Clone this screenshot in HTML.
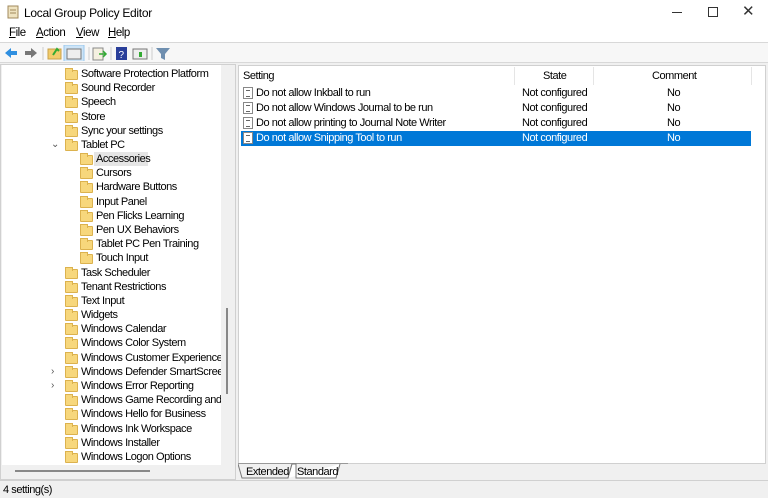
<!DOCTYPE html>
<html><head><meta charset="utf-8"><style>
*{margin:0;padding:0;box-sizing:border-box}
body{width:768px;height:498px;overflow:hidden;background:#f0f0f0;font-family:"Liberation Sans",sans-serif;font-size:11px;letter-spacing:-0.45px;color:#000;position:relative}
.a{position:absolute;white-space:nowrap}
.titlebar{left:0;top:0;width:768px;height:24px;background:#fff}
.menu{left:0;top:24px;width:768px;height:18px;background:#fff}
.tb{left:0;top:42px;width:768px;height:21px;background:#f7f7f7;border-top:1px solid #d8d8d8;border-bottom:1px solid #d8d8d8}
.fold{position:absolute;width:13px;height:10px;background:#f7d77c;border:1px solid #dcb24e;border-radius:1px}
.fold:before{content:"";position:absolute;left:-1px;top:-3px;width:6px;height:3px;background:#f7d77c;border:1px solid #dcb24e;border-bottom:none}
.row{position:absolute;height:14px;line-height:14px;white-space:nowrap}
.pi{position:absolute;width:10px;height:12px;border:1px solid #888;background:#fff}
.pi:before{content:"";position:absolute;left:2px;top:2px;width:4px;height:5px;border-top:1px solid #666;border-bottom:1px solid #666}
</style></head><body>
<div class="a titlebar"></div>
<svg class="a" style="left:6px;top:5px" width="14" height="14"><rect x="2" y="1" width="10" height="12" fill="#efe3c0" stroke="#a08a5c"/><line x1="4" y1="5" x2="10" y2="5" stroke="#a08a5c"/><line x1="4" y1="8" x2="10" y2="8" stroke="#a08a5c"/></svg>
<div class="a" style="left:24px;top:6px;font-size:12px;letter-spacing:-0.3px">Local Group Policy Editor</div>
<div class="a" style="left:672px;top:12px;width:10px;height:1px;background:#333"></div>
<div class="a" style="left:708px;top:7px;width:10px;height:10px;border:1px solid #333"></div>
<div class="a" style="left:742px;top:2px;font-size:15px;color:#333">✕</div>
<div class="a menu"></div>
<div class="a" style="left:9px;top:27px;font-size:11.5px"><u>F</u>ile</div>
<div class="a" style="left:36px;top:27px;font-size:11.5px"><u>A</u>ction</div>
<div class="a" style="left:76px;top:27px;font-size:11.5px"><u>V</u>iew</div>
<div class="a" style="left:108px;top:27px;font-size:11.5px"><u>H</u>elp</div>
<div class="a tb"></div>
<svg class="a" style="left:3px;top:45px" width="180" height="16">
<path d="M2 8 L8 3 V6 H14 V10 H8 V13 Z" fill="#2f8fe0"/>
<path d="M34 8 L28 3 V6 H22 V10 H28 V13 Z" fill="#777"/>
<line x1="40" y1="2" x2="40" y2="15" stroke="#ccc"/>
<rect x="45" y="4" width="13" height="10" fill="#f2cc6a" stroke="#c9a24a"/><path d="M50 10 L54 4 L56 6" stroke="#3a3" stroke-width="2" fill="none"/>
<rect x="61" y="0" width="20" height="17" fill="#cde4f7" stroke="#99c7ec"/><rect x="64" y="4" width="14" height="10" fill="#eee" stroke="#777"/>
<line x1="86" y1="2" x2="86" y2="15" stroke="#ccc"/>
<rect x="90" y="3" width="10" height="12" fill="#f5f0e0" stroke="#888"/><path d="M96 9 H103 M100 6 L103 9 L100 12" stroke="#3a3" stroke-width="1.5" fill="none"/>
<line x1="108" y1="2" x2="108" y2="15" stroke="#ccc"/>
<rect x="113" y="2" width="11" height="13" fill="#2a3f9a"/><text x="115.5" y="13" fill="#fff" font-size="10" font-family="Liberation Sans">?</text>
<rect x="130" y="4" width="14" height="10" fill="#eee" stroke="#777"/><rect x="136" y="7" width="3" height="5" fill="#3a3"/>
<line x1="149" y1="2" x2="149" y2="15" stroke="#ccc"/>
<path d="M153 3 H167 L162 9 V15 L158 13 V9 Z" fill="#6f8fb0"/>
</svg>
<div class="a" style="left:2px;top:65px;width:219px;height:400px;background:#fff"></div>
<div class="a" style="left:0;top:64px;width:236px;height:416px;border:1px solid #d0d0d0"></div>
<div class="a" style="left:226px;top:308px;width:2px;height:86px;background:#888"></div>
<div class="a" style="left:15px;top:470px;width:135px;height:2px;background:#888"></div>
<div class="a" style="left:94px;top:152px;width:54px;height:14px;background:#e5e5e5"></div>
<div id="tree"></div>
<div class="a" style="left:238px;top:65px;width:528px;height:399px;background:#fff;border:1px solid #d0d0d0"></div>
<div class="a" style="left:514px;top:67px;width:1px;height:18px;background:#e5e5e5"></div>
<div class="a" style="left:593px;top:67px;width:1px;height:18px;background:#e5e5e5"></div>
<div class="a" style="left:751px;top:67px;width:1px;height:18px;background:#e5e5e5"></div>
<div class="a" style="left:243px;top:70px">Setting</div>
<div class="a" style="left:543px;top:70px">State</div>
<div class="a" style="left:652px;top:70px">Comment</div>
<div class="a" style="left:241px;top:131px;width:510px;height:15px;background:#0078d7"></div>
<div id="list"></div>
<svg class="a" style="left:238px;top:463px" width="110" height="17"><line x1="0" y1="0.5" x2="110" y2="0.5" stroke="#999"/><path d="M0 1 L4 15 H50 L54 1" fill="#f0f0f0" stroke="#777"/><path d="M50 15 L54 1 L58 1 L58 15 H98 L102 1" fill="#fff" stroke="#777"/></svg>
<div class="a" style="left:246px;top:466px">Extended</div>
<div class="a" style="left:297px;top:466px">Standard</div>
<div class="a" style="left:0;top:480px;width:768px;height:18px;border-top:1px solid #d0d0d0;background:#f0f0f0"></div>
<div class="a" style="left:3px;top:484px">4 setting(s)</div>
<script>
var t=[[0,"Software Protection Platform"],[0,"Sound Recorder"],[0,"Speech"],[0,"Store"],[0,"Sync your settings"],[0,"Tablet PC","v"],[1,"Accessories"],[1,"Cursors"],[1,"Hardware Buttons"],[1,"Input Panel"],[1,"Pen Flicks Learning"],[1,"Pen UX Behaviors"],[1,"Tablet PC Pen Training"],[1,"Touch Input"],[0,"Task Scheduler"],[0,"Tenant Restrictions"],[0,"Text Input"],[0,"Widgets"],[0,"Windows Calendar"],[0,"Windows Color System"],[0,"Windows Customer Experience In"],[0,"Windows Defender SmartScreen",">"],[0,"Windows Error Reporting",">"],[0,"Windows Game Recording and Br"],[0,"Windows Hello for Business"],[0,"Windows Ink Workspace"],[0,"Windows Installer"],[0,"Windows Logon Options"]];
var h="";t.forEach(function(r,i){var y=67+i*14.18,x=r[0]?80:65;
h+='<div class="fold" style="left:'+x+'px;top:'+(y+3)+'px"></div>';
if(r[2])h+='<div class="a" style="left:51px;top:'+y+'px;color:#555;font-size:10px;line-height:14px">'+(r[2]=="v"?"&#8964;":"&#8250;")+'</div>';
h+='<div class="row" style="left:'+(x+16)+'px;top:'+y+'px;width:'+(221-x-16)+'px;overflow:hidden">'+r[1]+'</div>';});
document.getElementById("tree").innerHTML=h;
var l=["Do not allow Inkball to run","Do not allow Windows Journal to be run","Do not allow printing to Journal Note Writer","Do not allow Snipping Tool to run"];
h="";l.forEach(function(s,i){var y=86+i*15,c=i==3?"#fff":"#000";
h+='<div class="pi" style="left:243px;top:'+(y+1)+'px"></div>';
h+='<div class="row" style="left:256px;top:'+y+'px;color:'+c+'">'+s+'</div>';
h+='<div class="row" style="left:522px;top:'+y+'px;color:'+c+'">Not configured</div>';
h+='<div class="row" style="left:667px;top:'+y+'px;color:'+c+'">No</div>';});
document.getElementById("list").innerHTML=h;
</script>
</body></html>
